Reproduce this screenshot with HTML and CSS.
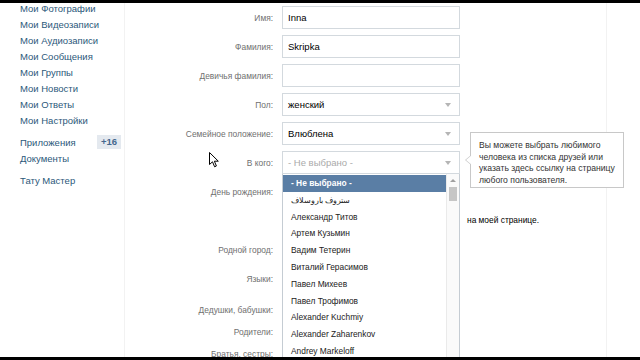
FILE: index.html
```html
<!doctype html>
<html>
<head>
    <meta charset="utf-8">
    <title>Редактирование страницы</title>
    <link rel="stylesheet" href="styles.css">
</head>
<body>
    <div class="page">
        <aside class="side">
            <ul class="menu">
                <li><a href="#">Мои Фотографии</a></li>
                <li><a href="#">Мои Видеозаписи</a></li>
                <li><a href="#">Мои Аудиозаписи</a></li>
                <li><a href="#">Мои Сообщения</a></li>
                <li><a href="#">Мои Группы</a></li>
                <li><a href="#">Мои Новости</a></li>
                <li><a href="#">Мои Ответы</a></li>
                <li><a href="#">Мои Настройки</a></li>
            </ul>
            <ul class="menu">
                <li><a href="#">Приложения</a><span class="badge">+16</span></li>
                <li><a href="#">Документы</a></li>
            </ul>
            <ul class="menu">
                <li><a href="#">Тату Мастер</a></li>
            </ul>
        </aside>

        <main class="content">
            <div class="form">
                <div class="row">
                    <div class="lbl">Имя:</div>
                    <div class="field"><div class="inp">Inna</div></div>
                </div>
                <div class="row">
                    <div class="lbl">Фамилия:</div>
                    <div class="field"><div class="inp">Skripka</div></div>
                </div>
                <div class="row">
                    <div class="lbl">Девичья фамилия:</div>
                    <div class="field"><div class="inp"></div></div>
                </div>
                <div class="row">
                    <div class="lbl">Пол:</div>
                    <div class="field"><div class="inp sel">женский</div></div>
                </div>
                <div class="row">
                    <div class="lbl">Семейное положение:</div>
                    <div class="field"><div class="inp sel">Влюблена</div></div>
                </div>
                <div class="row">
                    <div class="lbl">В кого:</div>
                    <div class="field">
                        <div class="inp sel empty">- Не выбрано -</div>

                        <div class="hint">
                            Вы можете выбрать любимого человека из списка друзей или указать здесь ссылку на страницу любого пользователя.
                        </div>

                        <div class="list">
                            <ul class="items">
                                <li class="cur">- Не выбрано -</li>
                                <li dir="rtl">ﺳﺘﺮﻭﻑ ﺑﺎﺭﻭﺳﻼﻑ</li>
                                <li>Александр Титов</li>
                                <li>Артем Кузьмин</li>
                                <li>Вадим Тетерин</li>
                                <li>Виталий Герасимов</li>
                                <li>Павел Михеев</li>
                                <li>Павел Трофимов</li>
                                <li>Alexander Kuchmiy</li>
                                <li>Alexander Zaharenkov</li>
                                <li>Andrey Markeloff</li>
                            </ul>
                            <div class="scroll">
                                <span class="up"></span>
                                <span class="thumb"></span>
                            </div>
                        </div>
                    </div>
                </div>
                <div class="row">
                    <div class="lbl">День рождения:</div>
                    <div class="field"></div>
                </div>
                <div class="row">
                    <div class="lbl"></div>
                    <div class="field"><span class="note">на моей странице.</span></div>
                </div>
                <div class="row">
                    <div class="lbl">Родной город:</div>
                    <div class="field"></div>
                </div>
                <div class="row wide">
                    <div class="lbl">Языки:</div>
                    <div class="field"></div>
                </div>
                <div class="row kin">
                    <div class="lbl">Дедушки, бабушки:</div>
                    <div class="field"></div>
                </div>
                <div class="row kin">
                    <div class="lbl">Родители:</div>
                    <div class="field"></div>
                </div>
                <div class="row kin">
                    <div class="lbl">Братья, сестры:</div>
                    <div class="field"></div>
                </div>
            </div>
        </main>

        <div class="rest"></div>
    </div>

    <svg class="cursor" width="10" height="16" viewBox="0 0 10 16">
        <path d="M0.5 0.5 L0.5 12.5 L3.5 9.8 L5.6 14.8 L7.4 14 L5.4 9.2 L9.3 9.2 Z" fill="#fff" stroke="#000" stroke-width="1" stroke-linejoin="round"/>
    </svg>

    <div class="bar bar-top"></div>
    <div class="bar bar-bottom"></div>
</body>
</html>
```

FILE: styles.css
```css
body{
    margin:0;
    background:#fff;
    color:#222;
    font-family:"Liberation Sans", Arial, sans-serif;
    font-size:9.5px;
    overflow:hidden;
}
.page{
    display:flex;
    height:360px;
    overflow:hidden;
}

/* left menu */
.side{
    width:125px;
    box-sizing:border-box;
    padding:0 3px 0 20px;
    border-right:1px solid #f2f2f2;
}
.menu{
    list-style:none;
    margin:0 0 6px;
    padding:0;
}
.menu li{
    display:flex;
    align-items:center;
    height:16px;
}
.menu a{
    color:#2b587a;
    text-decoration:none;
}
.badge{
    margin-left:auto;
    padding:0 4px;
    height:14px;
    line-height:14px;
    background:#e4e9ef;
    color:#45688e;
    font-weight:bold;
}

/* form */
.content{
    width:482px;
    box-sizing:border-box;
    border-right:1px solid #f2f2f2;
    font-size:8.4px;
}
.form{
    padding-top:6px;
}
.row{
    display:flex;
    align-items:center;
    height:23px;
    margin-bottom:6px;
}
.row.wide{
    margin-bottom:9px;
}
.row.kin{
    height:22px;
    margin-bottom:0;
}
.lbl{
    width:148px;
    padding-right:9px;
    text-align:right;
    color:#6f6f6f;
}
.field{
    position:relative;
    width:178px;
    height:23px;
}
.inp{
    box-sizing:border-box;
    height:23px;
    line-height:21px;
    padding:0 5px;
    border:1px solid #d3d9de;
    color:#000;
    font-size:9.5px;
}
.inp.sel{
    position:relative;
}
.inp.sel:after{
    content:"";
    position:absolute;
    right:8px;
    top:9px;
    border-left:3.5px solid transparent;
    border-right:3.5px solid transparent;
    border-top:4px solid #b5b5b5;
}
.inp.empty{
    color:#aaa;
}
.note{
    display:block;
    margin-left:185px;
    white-space:nowrap;
    line-height:23px;
    color:#000;
}

/* hint box */
.hint{
    position:absolute;
    left:188px;
    top:-19px;
    width:154px;
    height:56px;
    box-sizing:border-box;
    padding:7px 3px 0 8px;
    border:1px solid #c8c8c8;
    background:#fff;
    line-height:11.7px;
    color:#333;
    font-size:8.6px;
}
.hint:before, .hint:after{
    content:"";
    position:absolute;
    top:22px;
    border-top:5px solid transparent;
    border-bottom:5px solid transparent;
}
.hint:before{
    left:-6px;
    border-right:6px solid #c8c8c8;
}
.hint:after{
    left:-5px;
    border-right:6px solid #fff;
}

/* opened select list */
.list{
    position:absolute;
    left:0;
    top:23px;
    width:178px;
    height:200px;
    box-sizing:border-box;
    display:flex;
    border:1px solid #c5ccd3;
    border-top:none;
    background:#fff;
}
.items{
    flex:1;
    list-style:none;
    margin:0;
    padding:1px 0 0;
}
.items li{
    height:16.8px;
    line-height:16.8px;
    padding:0 8px;
    white-space:nowrap;
    color:#222;
    text-align:left;
}
.items li.cur{
    background:#5a7ea5;
    color:#fff;
    font-weight:bold;
}
.scroll{
    width:12px;
    border-left:1px solid #eaeaea;
    background:#fafafa;
    position:relative;
}
.scroll .up{
    position:absolute;
    left:3px;
    top:5px;
    border-left:3px solid transparent;
    border-right:3px solid transparent;
    border-bottom:3px solid #a0a0a0;
}
.scroll .thumb{
    position:absolute;
    left:2px;
    top:13px;
    width:8px;
    height:14px;
    background:#c6c6c6;
}

.rest{
    flex:1;
}

/* mouse pointer over the page */
.cursor{
    position:fixed;
    left:209px;
    top:152px;
}

/* dark letterbox lines of the frame */
.bar{
    position:fixed;
    left:0;
    right:0;
    height:3px;
    background:#000;
}
.bar-top{
    top:0;
}
.bar-bottom{
    bottom:0;
}
```
